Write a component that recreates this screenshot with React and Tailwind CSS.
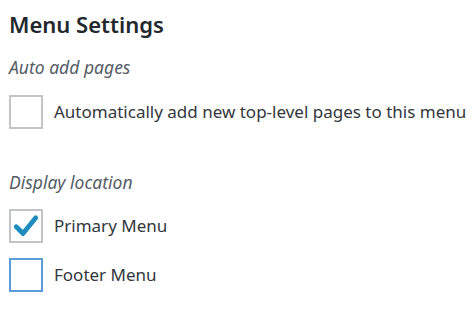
import React from "react";

const Box = ({ checked, focus }) => (
    <span className={`flex h-[34px] w-[34px] shrink-0 items-center justify-center border-2 bg-white ${focus ? 'border-[#5b9dd9]' : 'border-[#c3c4c7]'}`}>
        {checked && (
            <svg viewBox="0 0 20 20" className="h-[30px] w-[30px]">
                <path d="M3.5 10.5 L8 15 L16.5 4.5" fill="none" stroke="#1e8cbe" strokeWidth="3.2" strokeLinecap="round" strokeLinejoin="round" />
            </svg>
        )}
    </span>
);

const Row = ({ label, checked, focus }) => (
    <div className="flex items-center gap-[11px]">
        <Box checked={checked} focus={focus} />
        <span className="whitespace-nowrap text-[17px] text-[#32373c]">{label}</span>
    </div>
);

const App = () => {
    return (
        <div className="h-[311px] w-[474px] bg-white pl-[9px] pt-[6px]" style={{ fontFamily: '"Noto Sans", "Open Sans", sans-serif' }}>
            <h2 className="text-[22px] font-semibold leading-[36px] text-[#23282d]">Menu Settings</h2>
            <div className="mt-[13px] text-[17.5px] italic leading-[24px] text-[#555d66]">Auto add pages</div>
            <div className="mt-[16px]">
                <Row label="Automatically add new top-level pages to this menu" />
            </div>
            <div className="mt-[41px] text-[17.5px] italic leading-[24px] text-[#555d66]">Display location</div>
            <div className="mt-[15px] flex flex-col gap-[15px]">
                <Row label="Primary Menu" checked />
                <Row label="Footer Menu" focus />
            </div>
        </div>
    );
};

export default App;
